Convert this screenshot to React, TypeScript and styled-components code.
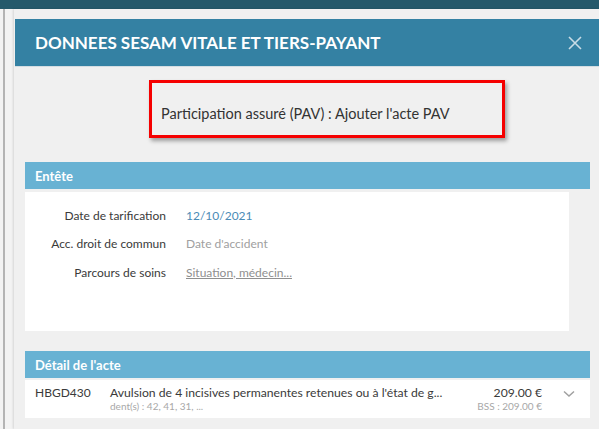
import React from "react";
import styled, { createGlobalStyle } from "styled-components";

const Global = createGlobalStyle`
  html, body { margin: 0; padding: 0; }
  body {
    background: #f0f0f0;
    font-family: Lato, "Open Sans", Arial, sans-serif;
    color: #333;
    width: 599px;
    height: 429px;
    overflow: hidden;
  }
`;

const TopBar = styled.div`
  height: 9px;
  background: #24596b;
`;

const Main = styled.div`
  display: flex;
  height: 420px;
`;

const LeftStrip = styled.div`
  width: 14px;
  flex: none;
  background: #f3f3f3;
  display: flex;
  padding-left: 3px;
  box-sizing: border-box;
`;

const StripLine = styled.div`
  width: 2px;
  background: #b4b4b4;
  height: 100%;
`;

const Modal = styled.div`
  flex: 1;
  background: #f0f0f0;
  padding-top: 10px;
  box-shadow: -1px 0 2px rgba(0, 0, 0, 0.12);
  display: flex;
  flex-direction: column;
`;

const Header = styled.div`
  height: 47px;
  margin-left: 1px;
  background: #3481a3;
  display: flex;
  align-items: center;
  justify-content: space-between;
  padding: 0 16px 0 20px;
  border-bottom: 1px solid #d4dde2;
`;

const Title = styled.h1`
  margin: 0;
  font-size: 17px;
  font-weight: 700;
  color: #fff;
`;

const Close = styled.button`
  border: 0;
  background: none;
  padding: 0;
  width: 16px;
  height: 16px;
  display: flex;
  cursor: pointer;
`;

const Body = styled.div`
  padding: 13px 9px 0 11px;
  display: flex;
  flex-direction: column;
`;

const Callout = styled.div`
  margin-left: 124px;
  width: 356px;
  height: 58px;
  box-sizing: border-box;
  border: 3px solid #f50000;
  box-shadow: 2px 3px 4px rgba(0, 0, 0, 0.35);
  display: flex;
  align-items: center;
  padding: 8px 0 0 9px;
  font-size: 14.5px;
  color: #333;
`;

const SectionHeader = styled.div<{ $top: number }>`
  margin-top: ${(p) => p.$top}px;
  height: 27px;
  background: #68b2d3;
  color: #fff;
  font-weight: 700;
  font-size: 13px;
  display: flex;
  align-items: center;
  padding-left: 10px;
`;

const Panel = styled.div`
  margin-top: 3px;
  margin-right: 21px;
  background: #fff;
  height: 139px;
  box-sizing: border-box;
  padding-top: 9px;
`;

const FieldRow = styled.div`
  display: grid;
  grid-template-columns: 141px 1fr;
  column-gap: 20px;
  height: 28.5px;
  align-items: center;
  font-size: 12px;
`;

const Label = styled.span`
  text-align: right;
  color: #3a3a3a;
`;

const Value = styled.span<{ $tone: "date" | "muted" | "link" }>`
  color: ${(p) => (p.$tone === "date" ? "#4b8bb6" : p.$tone === "muted" ? "#a0a0a0" : "#8f8f8f")};
  text-decoration: ${(p) => (p.$tone === "link" ? "underline" : "none")};
`;

const ActRow = styled.div`
  margin-top: 2px;
  background: #fff;
  height: 38px;
  display: grid;
  grid-template-columns: 75px 1fr auto 48px;
  padding-left: 10px;
  align-items: start;
  padding-top: 5px;
  box-sizing: border-box;
`;

const Code = styled.span`
  font-size: 12px;
  color: #3a3a3a;
  line-height: 15px;
`;

const Stack = styled.div<{ $align?: string }>`
  display: flex;
  flex-direction: column;
  align-items: ${(p) => p.$align || "flex-start"};
`;

const Main1 = styled.span`
  font-size: 12.2px;
  color: #3a3a3a;
  line-height: 15px;
`;

const Sub = styled.span`
  font-size: 10px;
  color: #a8a8a8;
  line-height: 12px;
`;

const Chevron = styled.div`
  display: flex;
  justify-content: center;
  padding-top: 5px;
  padding-left: 6px;
`;

export default function App() {
  return (
    <>
      <Global />
      <TopBar />
      <Main>
        <LeftStrip>
          <StripLine />
        </LeftStrip>
        <Modal>
          <Header>
            <Title>DONNEES SESAM VITALE ET TIERS-PAYANT</Title>
            <Close aria-label="Fermer">
              <svg width="16" height="16" viewBox="0 0 16 16">
                <path d="M2 2 L14 14 M14 2 L2 14" stroke="#c9dce6" strokeWidth="1.6" fill="none" />
              </svg>
            </Close>
          </Header>
          <Body>
            <Callout>Participation assuré (PAV) : Ajouter l'acte PAV</Callout>
            <SectionHeader $top={24}>Entête</SectionHeader>
            <Panel>
              <FieldRow>
                <Label>Date de tarification</Label>
                <Value $tone="date">12/10/2021</Value>
              </FieldRow>
              <FieldRow>
                <Label>Acc. droit de commun</Label>
                <Value $tone="muted">Date d'accident</Value>
              </FieldRow>
              <FieldRow>
                <Label>Parcours de soins</Label>
                <Value $tone="link">Situation, médecin...</Value>
              </FieldRow>
            </Panel>
            <SectionHeader $top={20}>Détail de l'acte</SectionHeader>
            <ActRow>
              <Code>HBGD430</Code>
              <Stack>
                <Main1>Avulsion de 4 incisives permanentes retenues ou à l'état de g...</Main1>
                <Sub>dent(s) : 42, 41, 31, ...</Sub>
              </Stack>
              <Stack $align="flex-end">
                <Main1>209.00 €</Main1>
                <Sub>BSS : 209.00 €</Sub>
              </Stack>
              <Chevron>
                <svg width="12" height="8" viewBox="0 0 12 8">
                  <path d="M1 1.5 L6 6 L11 1.5" stroke="#a0a0a0" strokeWidth="1.5" fill="none" />
                </svg>
              </Chevron>
            </ActRow>
          </Body>
        </Modal>
      </Main>
    </>
  );
}
